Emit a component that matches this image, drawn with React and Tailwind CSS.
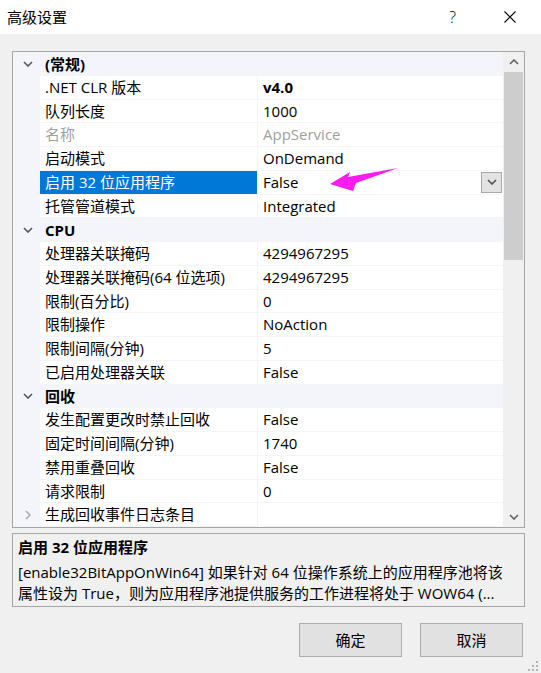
import React from 'react';

const sections = [
  {
    title: '(常规)',
    rows: [
      { name: '.NET CLR 版本', value: 'v4.0', bold: true },
      { name: '队列长度', value: '1000' },
      { name: '名称', value: 'AppService', disabled: true },
      { name: '启动模式', value: 'OnDemand' },
      { name: '启用 32 位应用程序', value: 'False', selected: true },
      { name: '托管管道模式', value: 'Integrated' },
    ],
  },
  {
    title: 'CPU',
    rows: [
      { name: '处理器关联掩码', value: '4294967295' },
      { name: '处理器关联掩码(64 位选项)', value: '4294967295' },
      { name: '限制(百分比)', value: '0' },
      { name: '限制操作', value: 'NoAction' },
      { name: '限制间隔(分钟)', value: '5' },
      { name: '已启用处理器关联', value: 'False' },
    ],
  },
  {
    title: '回收',
    rows: [
      { name: '发生配置更改时禁止回收', value: 'False' },
      { name: '固定时间间隔(分钟)', value: '1740' },
      { name: '禁用重叠回收', value: 'False' },
      { name: '请求限制', value: '0' },
      { name: '生成回收事件日志条目', value: '', expandable: true },
    ],
  },
];

function ChevronDown({ className = 'stroke-[#555]' }) {
  return (
    <svg width="10" height="6" viewBox="0 0 10 6" className={className} fill="none">
      <path d="M1 1l4 4 4-4" strokeWidth="1.6" />
    </svg>
  );
}

function ChevronRight() {
  return (
    <svg width="6" height="10" viewBox="0 0 6 10" fill="none" className="stroke-[#a8a8a8]">
      <path d="M1 1l4 4-4 4" strokeWidth="1.5" />
    </svg>
  );
}

function CategoryRow({ title }) {
  return (
    <div className="flex h-[23.75px] items-center bg-[#f3f5fa]">
      <div className="flex w-[27px] justify-center pl-[2px]">
        <ChevronDown />
      </div>
      <span className="pl-[5px] font-bold">{title}</span>
    </div>
  );
}

function PropRow({ row }) {
  return (
    <div className="flex h-[23.75px] bg-[#f3f5fa]">
      <div className="flex w-[27px] items-center justify-center pl-[2px]">
        {row.expandable && <ChevronRight />}
      </div>
      <div
        className={`flex w-[217px] items-center whitespace-nowrap pl-[5px] mb-[1px] ${
          row.selected ? 'bg-[#0078d7] text-white' : 'bg-white'
        } ${row.disabled ? 'text-[#a0a0a0]' : ''}`}
      >
        {row.name}
      </div>
      <div className="ml-[1px] mb-[1px] flex flex-1 items-center bg-white pl-[5px]">
        <span
          className={`flex-1 ${row.bold ? 'font-bold' : ''} ${row.disabled ? 'text-[#a0a0a0]' : ''}`}
        >
          {row.value}
        </span>
        {row.selected && (
          <div className="mr-[1px] flex h-[21px] w-[21px] items-center justify-center border border-[#a8a8a8] bg-[#e3e3e3]">
            <ChevronDown className="stroke-[#505050]" />
          </div>
        )}
      </div>
    </div>
  );
}

export default function App() {
  return (
    <div className="relative h-[673px] w-[541px] overflow-hidden bg-[#f0f0f0] text-[15px] text-black font-['Open_Sans','Noto_Sans_CJK_SC',sans-serif]">
      {/* Title bar */}
      <div className="flex h-[34px] items-center bg-white pl-[7px]">
        <span className="flex-1">高级设置</span>
        <span className="mr-[48px] text-[16px] font-light">?</span>
        <svg width="12" height="12" viewBox="0 0 12 12" className="mr-[25px] stroke-black">
          <path d="M0.5 0.5l11 11M11.5 0.5l-11 11" strokeWidth="1.1" />
        </svg>
      </div>

      <div className="px-[12px] pt-[17px]">
        {/* Property grid */}
        <div className="flex h-[477px] w-[513px] border border-[#a5a5a5] bg-white">
          <div className="flex-1 overflow-hidden">
            {sections.map((s) => (
              <div key={s.title}>
                <CategoryRow title={s.title} />
                {s.rows.map((r) => (
                  <PropRow key={r.name} row={r} />
                ))}
              </div>
            ))}
          </div>
          {/* Scrollbar */}
          <div className="flex w-[21px] flex-col bg-[#f0f0f0]">
            <div className="flex h-[20px] items-center justify-center">
              <ChevronDown className="rotate-180 stroke-[#606060]" />
            </div>
            <div className="mx-[1px] h-[188px] bg-[#cdcdcd]" />
            <div className="flex-1" />
            <div className="flex h-[20px] items-center justify-center">
              <ChevronDown className="stroke-[#606060]" />
            </div>
          </div>
        </div>

        {/* Description panel */}
        <div className="mt-[5px] h-[74px] w-[513px] border border-[#a5a5a5] px-[5px] pt-[3px]">
          <div className="h-[21px] leading-[21px] font-bold">启用 32 位应用程序</div>
          <div className="mt-[4px] leading-[20.5px] whitespace-nowrap">
            [enable32BitAppOnWin64] 如果针对 64 位操作系统上的应用程序池将该
            <br />
            属性设为 True，则为应用程序池提供服务的工作进程将处于 WOW64 (...
          </div>
        </div>
      </div>

      {/* Buttons */}
      <div className="mt-[16px] flex justify-end gap-[18px] pr-[18px]">
        <button className="h-[34px] w-[103px] border border-[#adadad] bg-[#e1e1e1]">确定</button>
        <button className="h-[34px] w-[103px] border border-[#adadad] bg-[#e1e1e1]">取消</button>
      </div>

      {/* Size grip */}
      <svg width="12" height="12" viewBox="0 0 12 12" className="absolute bottom-[1px] right-[2px] fill-[#b4b4b4]">
        <rect x="9" y="1" width="2" height="2" />
        <rect x="5" y="5" width="2" height="2" />
        <rect x="9" y="5" width="2" height="2" />
        <rect x="1" y="9" width="2" height="2" />
        <rect x="5" y="9" width="2" height="2" />
        <rect x="9" y="9" width="2" height="2" />
      </svg>

      {/* Annotation arrow */}
      <svg width="541" height="673" className="pointer-events-none absolute left-0 top-0">
        <polygon points="330,184 350,172 348,177 398,168 356,183 353,191" fill="#fb1bf0" />
      </svg>
    </div>
  );
}
